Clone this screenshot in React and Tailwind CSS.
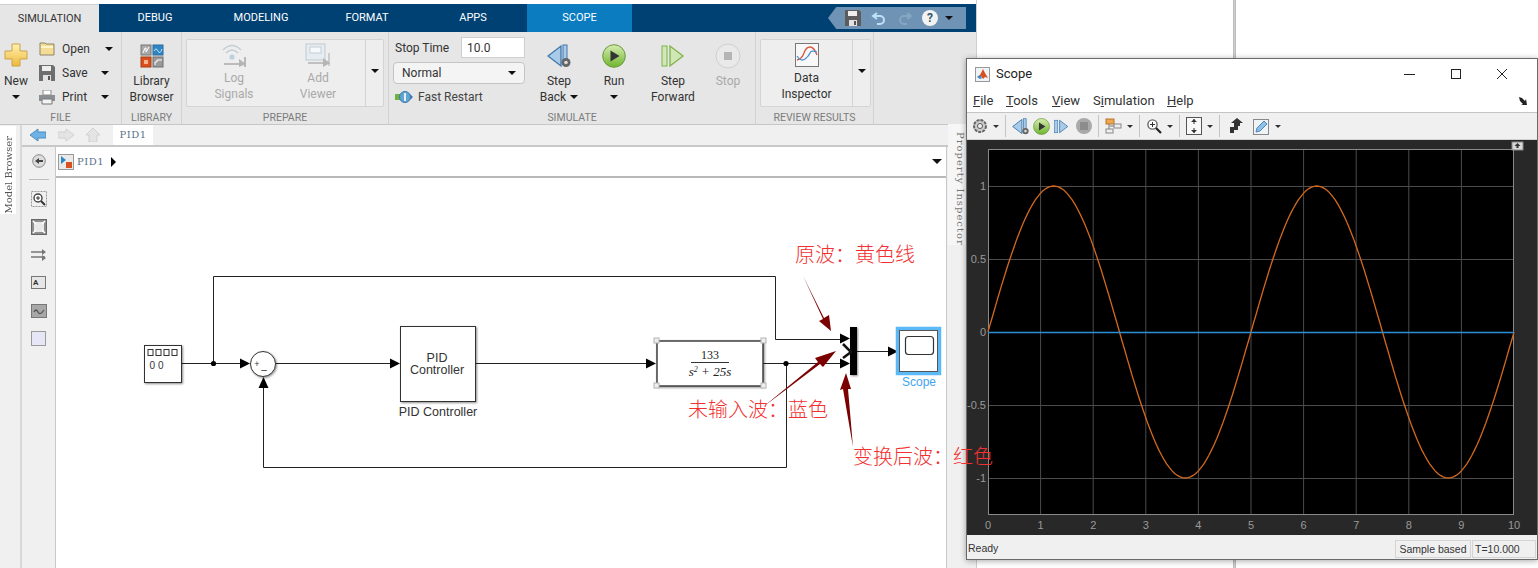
import React from "react";

const UI = "font-['Roboto','Noto_Sans',sans-serif]";
const SERIF = "font-['DejaVu_Serif','Liberation_Serif',serif]";

function Caret({ className = "" }) {
  return <span className={`inline-block w-0 h-0 border-x-[4px] border-x-transparent border-t-[4px] border-t-[#111] ${className}`} />;
}

/* ---------- ribbon icons ---------- */
const NewIcon = () => (
  <svg width="24" height="24" viewBox="0 0 24 24">
    <defs>
      <linearGradient id="plus" x1="0" y1="0" x2="0" y2="1">
        <stop offset="0" stopColor="#fff3b0" />
        <stop offset="1" stopColor="#eeb93a" />
      </linearGradient>
    </defs>
    <path d="M8 1h8v7h7v8h-7v7H8v-7H1V8h7z" fill="url(#plus)" stroke="#c9a24a" />
  </svg>
);
const OpenIcon = () => (
  <svg width="16" height="14" viewBox="0 0 16 14">
    <path d="M1 1h5l1 1h8v11H1z" fill="#f4dc96" stroke="#8d8468" />
    <path d="M2 4h12v2H2z" fill="#fff4c8" />
  </svg>
);
const SaveIcon = ({ dark }) => (
  <svg width="16" height="16" viewBox="0 0 16 16">
    <path d="M0 0h14l2 2v14H0z" fill={dark ? "#5c5c5c" : "#6e6e6e"} />
    <path d="M3 1h9v5H3z" fill="#eee" />
    <path d="M4 10h8v6H4z" fill="#e2e2e2" />
    <path d="M9 11h2v4H9z" fill="#555" />
  </svg>
);
const PrintIcon = () => (
  <svg width="16" height="15" viewBox="0 0 16 15">
    <path d="M4 0h8v5H4z" fill="#fff" stroke="#888" />
    <path d="M0 5h16v6H0z" fill="#8b8f94" />
    <path d="M3 9h10v5H3z" fill="#f3f3f3" stroke="#777" />
  </svg>
);
const LibraryIcon = () => (
  <svg width="24" height="24" viewBox="0 0 24 24">
    <rect x="1" y="1" width="10" height="10" fill="#a9a9a9" stroke="#777" />
    <path d="M3 9l2-5h1v4l3-5" stroke="#fff" fill="none" />
    <rect x="13" y="1" width="10" height="10" fill="#2f86c5" stroke="#2a6a9c" />
    <path d="M14 7q2-4 4 0t4-2" stroke="#bfe3fb" fill="none" />
    <rect x="1" y="13" width="10" height="10" fill="#d9501e" stroke="#a63a12" />
    <rect x="4" y="16" width="4" height="4" fill="#f6b38e" />
    <rect x="13" y="13" width="10" height="10" fill="#9a9a9a" stroke="#6f6f6f" />
    <path d="M15 21v-3h2v-2h5" stroke="#fff" fill="none" />
  </svg>
);
const LogIcon = () => (
  <svg width="26" height="24" viewBox="0 0 26 24" fill="none" stroke="#c3ced6" strokeWidth="1.6">
    <path d="M2 7q9-9 18 0M5 10q6-6 12 0" />
    <circle cx="11" cy="14" r="2.6" fill="#bcd0de" stroke="none" />
    <path d="M3 21h18" stroke="#bbb" strokeWidth="2" />
    <path d="M18 16l7 5-7 3z" fill="#b5b5b5" stroke="none" />
    <path d="M24 14v10" stroke="#aaa" />
  </svg>
);
const ViewerIcon = () => (
  <svg width="26" height="24" viewBox="0 0 26 24" fill="none">
    <rect x="1" y="1" width="19" height="16" fill="#e6edf2" stroke="#bfc9d0" />
    <rect x="5" y="4" width="11" height="6" fill="#f6f9fb" stroke="#c3ced6" />
    <path d="M3 20h18" stroke="#c0c0c0" strokeWidth="2" />
    <path d="M18 15l7 5-7 4z" fill="#b5b5b5" />
    <path d="M24 10v13" stroke="#aaa" />
  </svg>
);
const StepBackIcon = ({ s = 24 }) => (
  <svg width={s} height={s} viewBox="0 0 24 24">
    <path d="M14 2v20L1 12z" fill="#a9cbe8" stroke="#3f78ad" strokeWidth="1.3" />
    <rect x="16" y="1" width="4" height="15" fill="#a9cbe8" stroke="#3f78ad" />
    <circle cx="19" cy="18.5" r="4.5" fill="#666" />
    <circle cx="19" cy="18.5" r="1.8" fill="#ddd" />
  </svg>
);
const RunIcon = ({ s = 24 }) => (
  <svg width={s} height={s} viewBox="0 0 24 24">
    <defs>
      <linearGradient id={`run${s}`} x1="0" y1="0" x2="0" y2="1">
        <stop offset="0" stopColor="#d6ecb0" />
        <stop offset="1" stopColor="#6fb52f" />
      </linearGradient>
    </defs>
    <circle cx="12" cy="12" r="11.3" fill={`url(#run${s})`} stroke="#6a9a3c" />
    <path d="M8.5 6.5l9 5.5-9 5.5z" fill="#333" />
  </svg>
);
const StepFwdIcon = ({ color = "#7fb24c", fill = "#d2e8b4", s = 24 }) => (
  <svg width={s} height={s} viewBox="0 0 24 24">
    <rect x="1" y="2" width="5" height="20" fill={fill} stroke={color} />
    <path d="M9 2v20l13-10z" fill={fill} stroke={color} strokeWidth="1.3" />
  </svg>
);
const StopIcon = () => (
  <svg width="26" height="26" viewBox="0 0 26 26">
    <circle cx="13" cy="13" r="12" fill="#e9e9e9" stroke="#cfcfcf" />
    <rect x="9" y="9" width="8" height="8" fill="#b5b5b5" />
  </svg>
);
const InspectorIcon = () => (
  <svg width="24" height="24" viewBox="0 0 24 24" fill="none">
    <rect x="0.5" y="0.5" width="23" height="23" fill="#f8f8f8" stroke="#777" />
    <path d="M2 17q5-1 7-7t6-6 7 8" stroke="#d9573f" strokeWidth="1.3" />
    <path d="M2 13q4 6 8 3t5-6 7-1" stroke="#4a90d0" strokeWidth="1.3" />
  </svg>
);
const RestartIcon = () => (
  <svg width="18" height="12" viewBox="0 0 18 12">
    <rect x="0" y="3" width="6" height="6" fill="#6fb33a" />
    <circle cx="10" cy="6" r="5.5" fill="#5fa5d6" stroke="#3f78ad" />
    <rect x="9" y="2" width="2" height="8" fill="#e3f0fa" />
    <path d="M15 3l3 3-3 3z" fill="#3f78ad" />
  </svg>
);

function Section({ w, label, children }) {
  return (
    <div className={`${w} flex flex-col border-r border-[#d2d2d2] shrink-0`}>
      <div className="h-[78px] flex">{children}</div>
      <div className="h-[14px] leading-[15px] text-center text-[10.5px] text-[#7c7c7c]">{label}</div>
    </div>
  );
}

function Tool({ w, icon, lines, caret, disabled, iconH = "h-[34px]" }) {
  return (
    <div className={`${w} pt-[7px] flex flex-col items-center leading-[16px] text-[12px] ${disabled ? "text-[#a9a9a9]" : "text-[#333]"}`}>
      <div className={`${iconH} flex items-center justify-center`}>{icon}</div>
      {lines.map((l, i) => (
        <div key={i} className="flex items-center gap-[4px] h-[16px]">
          {l}
          {caret === "inline" && i === lines.length - 1 && <Caret />}
        </div>
      ))}
      {caret === "below" && (
        <div className="h-[16px] flex items-center">
          <Caret />
        </div>
      )}
    </div>
  );
}

function FileRow({ icon, text, caretW }) {
  return (
    <div className="h-[24px] flex items-center text-[12px] text-[#333]">
      <span className="w-[16px] flex justify-center">{icon}</span>
      <span className={`${caretW} pl-[7px]`}>{text}</span>
      <Caret />
    </div>
  );
}

function Ribbon() {
  return (
    <div className="h-[92px] shrink-0 flex bg-[#e6e6e6] border-b border-[#c6c6c6] box-content">
      <Section w="w-[122px]" label="FILE">
        <div className="w-[32px] pt-[11px] flex flex-col items-center text-[12px] text-[#333] leading-[16px]">
          <div className="h-[30px] flex items-start"><NewIcon /></div>
          <div>New</div>
          <div className="h-[16px] flex items-center"><Caret /></div>
        </div>
        <div className="pl-[7px] pt-[5px]">
          <FileRow icon={<OpenIcon />} text="Open" caretW="w-[50px]" />
          <FileRow icon={<SaveIcon />} text="Save" caretW="w-[46px]" />
          <FileRow icon={<PrintIcon />} text="Print" caretW="w-[46px]" />
        </div>
      </Section>
      <Section w="w-[60px]" label="LIBRARY">
        <Tool w="w-full" icon={<LibraryIcon />} lines={["Library", "Browser"]} />
      </Section>
      <Section w="w-[207px]" label="PREPARE">
        <div className="mx-[4px] mt-[7px] h-[68px] w-[199px] flex bg-[#eeeeee] border border-[#d4d4d4] rounded-[2px]">
          <div className="w-[178px] flex">
            <div className="w-[94px] -mt-[7px]">
              <Tool w="w-full" iconH="h-[30px]" icon={<LogIcon />} lines={["Log", "Signals"]} disabled />
            </div>
            <div className="w-[74px] -mt-[7px]">
              <Tool w="w-full" iconH="h-[30px]" icon={<ViewerIcon />} lines={["Add", "Viewer"]} disabled />
            </div>
          </div>
          <div className="flex-1 border-l border-[#d4d4d4] flex items-center justify-center pb-[4px]"><Caret /></div>
        </div>
      </Section>
      <Section w="w-[367px]" label="SIMULATE">
        <div className="w-[142px] pl-[4px] pt-[5px] text-[12px] text-[#333]">
          <div className="flex items-center h-[21px]">
            <span className="w-[68px] pl-[2px]">Stop Time</span>
            <div className="w-[64px] h-[21px] bg-white border border-[#cfcfcf] pl-[5px] leading-[20px]">10.0</div>
          </div>
          <div className="mt-[4px] w-[132px] h-[22px] bg-[#f4f4f4] border border-[#c4c4c4] rounded-[4px] flex items-center justify-between pl-[8px] pr-[8px]">
            Normal <Caret />
          </div>
          <div className="mt-[5px] flex items-center h-[16px] pl-[2px] gap-[5px] text-[#444]">
            <RestartIcon /> Fast Restart
          </div>
        </div>
        <Tool w="w-[56px]" icon={<StepBackIcon />} lines={["Step", "Back"]} caret="inline" />
        <Tool w="w-[54px]" icon={<RunIcon />} lines={["Run"]} caret="below" />
        <Tool w="w-[64px]" icon={<StepFwdIcon />} lines={["Step", "Forward"]} />
        <Tool w="w-[46px]" icon={<StopIcon />} lines={["Stop"]} disabled />
      </Section>
      <Section w="w-[118px]" label="REVIEW RESULTS">
        <div className="ml-[4px] mt-[7px] h-[68px] w-[111px] flex bg-[#eeeeee] border border-[#d4d4d4] rounded-[2px]">
          <div className="w-[91px] -mt-[7px]">
            <Tool w="w-full" iconH="h-[30px]" icon={<InspectorIcon />} lines={["Data", "Inspector"]} />
          </div>
          <div className="flex-1 border-l border-[#d4d4d4] flex items-center justify-center pb-[4px]"><Caret /></div>
        </div>
      </Section>
    </div>
  );
}

function TabBar() {
  const tabs = ["DEBUG", "MODELING", "FORMAT", "APPS"];
  return (
    <div className="h-[28px] shrink-0 flex items-stretch bg-[#004173] text-[11px] leading-[28px] text-white text-center">
      <div className="w-[99px] mr-[3px] bg-[#e6e6e6] text-[#333] border-t border-[#d0d0d0]">SIMULATION</div>
      {tabs.map((t) => (
        <div key={t} className="w-[106px]">{t}</div>
      ))}
      <div className="w-[105px] ml-[1px] bg-[#0a7cbf]">SCOPE</div>
      <div className="ml-auto mr-[10px] mt-[3px] w-[138px] h-[22px] bg-[#6f93b4] [clip-path:polygon(0_50%,6%_0,100%_0,100%_100%,6%_100%)] flex items-center pl-[17px]">
        <SaveIcon dark />
        <svg className="ml-[10px]" width="16" height="14" viewBox="0 0 16 14" fill="none" stroke="#bfe0f7" strokeWidth="2">
          <path d="M6 2L2 5l4 3M2 5h7a4 4 0 010 8H6" />
        </svg>
        <svg className="ml-[10px]" width="16" height="14" viewBox="0 0 16 14" fill="none" stroke="#86a7c2" strokeWidth="2">
          <path d="M10 2l4 3-4 3M14 5H7a4 4 0 000 8h3" />
        </svg>
        <span className="ml-[9px] w-[16px] h-[16px] rounded-full bg-[#f2f2f2] text-[#34556f] text-[12px] leading-[16px] font-bold">?</span>
        <Caret className="ml-[7px]" />
      </div>
    </div>
  );
}

/* ---------- palette on the left of the model ---------- */
function Palette() {
  return (
    <div className="w-[33px] shrink-0 bg-[#f0f0f0] flex flex-col items-center pt-[7px]">
      <svg width="14" height="14" viewBox="0 0 14 14">
        <circle cx="7" cy="7" r="6.3" fill="#ddd" stroke="#888" />
        <path d="M3 7l4-3v2h4v2H7v2z" fill="#444" />
      </svg>
      <div className="mt-[11px] w-[20px] h-px bg-[#bdbdbd]" />
      <svg className="mt-[11px]" width="16" height="16" viewBox="0 0 16 16" fill="none">
        <rect x="0.5" y="0.5" width="15" height="15" stroke="#999" strokeDasharray="2 1" />
        <circle cx="7" cy="7" r="4" fill="#fff" stroke="#444" strokeWidth="1.4" />
        <path d="M10 10l4 4" stroke="#333" strokeWidth="2" />
        <path d="M5 7h4M7 5v4" stroke="#333" />
      </svg>
      <svg className="mt-[12px]" width="16" height="16" viewBox="0 0 16 16" fill="none">
        <rect x="0.5" y="0.5" width="15" height="15" fill="#8f8f8f" stroke="#666" />
        <rect x="3" y="3" width="10" height="10" fill="#e9e9e9" />
        <path d="M2 2l3 3M14 2l-3 3M2 14l3-3M14 14l-3-3" stroke="#fff" strokeWidth="1.5" />
      </svg>
      <svg className="mt-[12px]" width="16" height="16" viewBox="0 0 16 16" fill="none" stroke="#777" strokeWidth="1.5">
        <path d="M0 5h14M0 10h14" />
        <path d="M11 2l4 3-4 3zM11 8l4 3-4 3z" fill="#777" stroke="none" />
      </svg>
      <div className="mt-[13px] w-[15px] h-[13px] bg-[#e6e6e6] border border-[#777] flex items-center pl-[1px] text-[8px] leading-none font-bold text-[#333]">A</div>
      <svg className="mt-[15px]" width="16" height="14" viewBox="0 0 16 14" fill="none">
        <rect x="0.5" y="0.5" width="15" height="13" fill="#a8a8a8" stroke="#777" />
        <path d="M3 8q2-4 4 0t6-2" stroke="#555" strokeWidth="1.3" />
      </svg>
      <div className="mt-[13px] w-[15px] h-[15px] bg-[#e6e6f7] border border-[#9a9a9a]" />
    </div>
  );
}

/* ---------- block diagram, drawn in page coordinates ---------- */
function Arrow({ x, y }) {
  return <path d={`M${x - 10} ${y - 5}L${x} ${y}L${x - 10} ${y + 5}z`} fill="#000" />;
}

function Diagram() {
  return (
    <svg className="absolute left-0 top-0" width="889" height="390" viewBox="56 178 889 390">
      <defs>
        <filter id="shadow" x="-20%" y="-20%" width="140%" height="140%">
          <feDropShadow dx="1" dy="1" stdDeviation="1" floodColor="#000" floodOpacity="0.45" />
        </filter>
      </defs>
      <g fill="none" stroke="#222" strokeWidth="1">
        <path d="M182 363.5H241M213.5 363V276.5H775.5V339.5H841" />
        <path d="M276 363.5H391M475 363.5H647M763 363.5H841" />
        <path d="M786.5 363V467.5H263.5V388" />
        <path d="M857 351.5H889" />
      </g>
      <circle cx="213.5" cy="363.5" r="2.6" fill="#000" />
      <circle cx="786" cy="363.5" r="2.6" fill="#000" />
      <Arrow x={250} y={363.5} />
      <Arrow x={400} y={363.5} />
      <Arrow x={656} y={363.5} />
      <Arrow x={850} y={338.5} />
      <Arrow x={850} y={363.5} />
      <Arrow x={898} y={351.5} />
      <path d="M258.5 388L263.5 377L268.5 388z" fill="#000" />

      <g filter="url(#shadow)" fill="#fff" stroke="#333">
        <rect x="144.5" y="345.5" width="37" height="37" />
        <circle cx="263" cy="364" r="12.5" />
        <rect x="400.5" y="326.5" width="75" height="75" />
        <rect x="657" y="341" width="106" height="45" strokeWidth="1.4" />
      </g>
      <g fill="#fff" stroke="#333">
        <rect x="148" y="349.5" width="5" height="6" />
        <rect x="156" y="349.5" width="5" height="6" />
        <rect x="164" y="349.5" width="5" height="6" />
        <rect x="172" y="349.5" width="5" height="6" />
      </g>
      <g fill="#eee" stroke="#b4b4b4">
        <rect x="654" y="338" width="5" height="5" />
        <rect x="761" y="338" width="5" height="5" />
        <rect x="654" y="383" width="5" height="5" />
        <rect x="761" y="383" width="5" height="5" />
      </g>
      <g className="font-['Liberation_Sans',sans-serif]" fill="#333" textAnchor="middle">
        <text x="158" y="369" fontSize="10" letterSpacing="3">00</text>
        <text x="257" y="367" fontSize="9">+</text>
        <text x="264" y="373" fontSize="10">–</text>
        <text x="437" y="362" fontSize="12.5">PID</text>
        <text x="437" y="374" fontSize="12.5">Controller</text>
        <text x="438" y="416" fontSize="12.5">PID Controller</text>
        <text x="919" y="386" fontSize="12" fill="#3fa5ef">Scope</text>
      </g>
      <g className="font-['Liberation_Serif',serif]" fill="#222" textAnchor="middle">
        <text x="710" y="359" fontSize="12">133</text>
        <path d="M691 362.5H729" stroke="#333" />
        <text x="710" y="376" fontSize="13" fontStyle="italic">
          s<tspan fontSize="8" dy="-4">2</tspan><tspan dy="4"> + 25s</tspan>
        </text>
      </g>

      <rect x="850" y="327" width="7" height="48" fill="#000" filter="url(#shadow)" />
      <path d="M843 344L851 352L843 358" fill="none" stroke="#111" strokeWidth="2.5" />

      <rect x="897.5" y="328.5" width="42" height="45" fill="#fff" stroke="#5bb9f7" strokeWidth="3.5" />
      <rect x="899.5" y="330.5" width="38" height="41" fill="#fff" stroke="#555" />
      <rect x="905.5" y="336.5" width="28" height="18" rx="3" fill="#fff" stroke="#333" strokeWidth="1.2" />
    </svg>
  );
}

/* ---------- red call-outs, they lie over both windows ---------- */
function Callouts() {
  const note = "absolute whitespace-nowrap text-[20px] leading-[26px] text-[#f23030] font-['Noto_Sans_CJK_SC',sans-serif] font-light";
  return (
    <>
      <svg className="absolute inset-0" width="1538" height="568" viewBox="0 0 1538 568">
        <g fill="#7b0000">
          <path d="M803 276L824 318L829 315L831 331L819 321L823 319z" />
          <path d="M763 407L818 362L815 358L836 351L823 367L820 364z" />
          <path d="M853 447L843 389L840 390L846 373L851 389L848 389z" />
        </g>
      </svg>
      <div className={`${note} left-[795px] top-[241px]`}>原波：黄色线</div>
      <div className={`${note} left-[688px] top-[396px]`}>未输入波：蓝色</div>
      <div className={`${note} left-[853px] top-[443px]`}>变换后波：红色</div>
    </>
  );
}

/* ---------- scope window ---------- */
function ScopePlot() {
  const X0 = 988;
  const Y0 = 332;
  const sx = 52.6;
  const sy = 146;
  let sine = "";
  for (let t = 0; t <= 10.001; t += 0.05) {
    const x = X0 + t * sx;
    const y = Y0 - Math.sin((2 * Math.PI * t) / 5) * sy;
    sine += `${t === 0 ? "M" : "L"}${x.toFixed(1)} ${y.toFixed(1)}`;
  }
  const xs = [0, 1, 2, 3, 4, 5, 6, 7, 8, 9, 10];
  const ys = [
    ["1", 186],
    ["0.5", 259],
    ["0", 332],
    ["-0.5", 405],
    ["-1", 478],
  ];
  return (
    <div className="relative h-[395px] bg-[#282828]">
      <svg className="absolute inset-0 w-full h-full" viewBox="967 140 570 395">
        <rect x="988.5" y="149.5" width="525" height="365" fill="#000" stroke="#8a8a8a" />
        {xs.slice(1, -1).map((v) => (
          <path key={v} d={`M${X0 + v * sx} 150V514`} stroke="#4c4c4c" />
        ))}
        {ys.map(([l, y]) => (
          <path key={l} d={`M989 ${y}.5H1513`} stroke="#4c4c4c" />
        ))}
        <path d={sine} fill="none" stroke="#d2691e" strokeWidth="1.3" />
        <path d="M988 332.5H1514" stroke="#2d8fd6" strokeWidth="1.3" />
        <g className="font-['Liberation_Sans',sans-serif]" fontSize="11" fill="#9a9a9a">
          {xs.map((v) => (
            <text key={v} x={X0 + v * sx} y="529" textAnchor="middle">{v}</text>
          ))}
          {ys.map(([l, y]) => (
            <text key={l} x="986" y={y + 4} textAnchor="end">{l}</text>
          ))}
        </g>
        <rect x="1512" y="142" width="11" height="8" fill="#d8d8d8" stroke="#888" />
        <path d="M1517.5 143l3 3h-2v2h-2v-2h-2z" fill="#333" />
      </svg>
    </div>
  );
}

function ToolSep() {
  return <span className="w-px h-[22px] bg-[#c4c4c4] mx-[6px]" />;
}

function SmallCaret() {
  return <span className="ml-[5px] inline-block w-0 h-0 border-x-[3px] border-x-transparent border-t-[3px] border-t-[#333]" />;
}

function ScopeWindow() {
  return (
    <div className={`${UI} absolute left-[966px] top-[58px] w-[572px] h-[502px] bg-[#f0f0f0] border border-[#6a6a6a] shadow-[0_1px_6px_rgba(0,0,0,0.35)] flex flex-col`}>
      <div className="h-[31px] shrink-0 bg-white flex items-center pl-[8px] pb-[1px] text-[13px] text-[#222]">
        <svg width="15" height="15" viewBox="0 0 15 15">
          <rect x="0.5" y="0.5" width="14" height="14" fill="#eef3f8" stroke="#999" />
          <path d="M2 10l3-2 3-6 2 4 3 5-3-1-2 2-2-3z" fill="#d9501e" />
          <path d="M2 10l3-2 2 3-2 1z" fill="#3f86c5" />
        </svg>
        <span className="ml-[6px]">Scope</span>
        <div className="ml-auto mr-[6px] flex items-center text-[#222]">
          <svg width="46" height="14" viewBox="0 0 46 14" stroke="#222"><path d="M17 7.5H28" /></svg>
          <svg width="46" height="14" viewBox="0 0 46 14" fill="none" stroke="#222"><rect x="18.5" y="2.5" width="9" height="9" /></svg>
          <svg className="mr-[6px]" width="46" height="14" viewBox="0 0 46 14" stroke="#222"><path d="M18 2l10 10M28 2L18 12" /></svg>
        </div>
      </div>
      <div className="h-[23px] shrink-0 bg-white border-b border-[#c4c4c4] flex items-center pl-[6px] text-[13px] text-[#333] relative">
        <span className="w-[33px]"><u>F</u>ile</span>
        <span className="w-[46px]"><u>T</u>ools</span>
        <span className="w-[41px]"><u>V</u>iew</span>
        <span className="w-[74px]">S<u>i</u>mulation</span>
        <span><u>H</u>elp</span>
        <svg className="ml-auto mr-[10px]" width="8" height="8" viewBox="0 0 8 8"><path d="M0 0l3 1 3 3 1-2 1 6H2l2-1-3-3z" fill="#222" /></svg>
      </div>
      <div className="h-[27px] shrink-0 bg-[#f0f0f0] border-b border-[#d0d0d0] flex items-center pl-[5px]">
        <svg width="16" height="16" viewBox="0 0 16 16" fill="none">
          <circle cx="8" cy="8" r="6" fill="#ccc" stroke="#666" strokeWidth="2" strokeDasharray="3 1" />
          <circle cx="8" cy="8" r="2.5" fill="#f3f3f3" stroke="#555" />
        </svg>
        <SmallCaret />
        <ToolSep />
        <span className="flex items-center gap-[4px]">
          <StepBackIcon s={17} />
          <RunIcon s={17} />
          <StepFwdIcon s={15} color="#3f78ad" fill="#a9cbe8" />
          <span className="ml-[3px] w-[16px] h-[16px] rounded-full bg-[#a9a9a9] flex items-center justify-center">
            <span className="w-[8px] h-[8px] bg-[#8c8c8c]" />
          </span>
        </span>
        <ToolSep />
        <svg width="17" height="16" viewBox="0 0 17 16" fill="none">
          <rect x="1" y="1" width="8" height="5" fill="#f2a64e" stroke="#b4762c" />
          <rect x="9" y="6" width="7" height="4" fill="#eee" stroke="#888" />
          <rect x="1" y="11" width="7" height="4" fill="#eee" stroke="#888" />
          <path d="M4 6v5M9 8H5" stroke="#777" />
        </svg>
        <SmallCaret />
        <ToolSep />
        <svg width="16" height="16" viewBox="0 0 16 16" fill="none">
          <circle cx="6.5" cy="6.5" r="4.6" fill="#fff" stroke="#666" strokeWidth="1.4" />
          <path d="M10 10l5 5" stroke="#222" strokeWidth="2.2" />
          <path d="M4 6.5h5M6.5 4v5" stroke="#333" />
        </svg>
        <SmallCaret />
        <ToolSep />
        <svg width="16" height="18" viewBox="0 0 16 18" fill="none">
          <rect x="0.5" y="0.5" width="15" height="17" fill="#f8f8f8" stroke="#555" />
          <path d="M8 2v5M8 11v5" stroke="#333" />
          <path d="M5 5l3-3 3 3zM5 13l3 3 3-3z" fill="#333" />
        </svg>
        <SmallCaret />
        <ToolSep />
        <svg className="ml-[3px]" width="16" height="16" viewBox="0 0 16 16">
          <path d="M1 15V9h4V5H2l6-5 6 5h-3v3H9v4H5v3z" fill="#333" />
        </svg>
        <svg className="ml-[8px]" width="17" height="17" viewBox="0 0 17 17" fill="none">
          <rect x="0.5" y="1.5" width="15" height="15" fill="#eef3f8" stroke="#888" />
          <path d="M3 14l1-4 7-7 3 3-7 7z" fill="#8fc0e8" stroke="#4f86b8" />
        </svg>
        <SmallCaret />
      </div>
      <ScopePlot />
      <div className="flex-1 bg-[#f0f0f0] flex items-center pl-[1px] pt-[4px] text-[10.5px] text-[#333] font-['Liberation_Sans',sans-serif]">
        <span>Ready</span>
        <div className="ml-auto flex gap-[1px] mr-[1px]">
          <span className="w-[76px] h-[18px] border border-[#d4d4d4] text-center leading-[17px]">Sample based</span>
          <span className="w-[64px] h-[18px] border border-[#d4d4d4] pl-[2px] leading-[17px]">T=10.000</span>
        </div>
      </div>
    </div>
  );
}

export default function App() {
  return (
    <div className={`${UI} relative w-[1538px] h-[568px] overflow-hidden bg-white flex`}>
      {/* simulink window */}
      <div className="w-[976px] h-full shrink-0 flex flex-col pt-[4px] border-r border-[#cfcfcf] box-content">
        <TabBar />
        <Ribbon />
        <div className="flex-1 min-h-0 flex bg-[#f0f0f0]">
          {/* model browser tab */}
          <div className="w-[22px] shrink-0 border-r-2 border-[#d8d8d8]">
            <div className={`${SERIF} mt-[1px] w-[16px] h-[88px] pt-[10px] bg-white flex items-center justify-center text-[10px] text-[#555]`}>
              <span className="[writing-mode:vertical-rl] rotate-180 whitespace-nowrap">Model Browser</span>
            </div>
          </div>
          <div className="flex-1 flex flex-col min-w-0">
            <div className="h-[20px] shrink-0 flex items-center border-b-2 border-[#c8c8c8] box-content">
              <div className="w-[91px] pl-[8px] flex items-center gap-[12px]">
                <svg width="16" height="14" viewBox="0 0 16 14"><path d="M0 7l8-6v3h8v6H8v3z" fill="#6db1e5" stroke="#4d8cbd" /></svg>
                <svg width="16" height="14" viewBox="0 0 16 14"><path d="M16 7L8 1v3H0v6h8v3z" fill="#e4e4e4" stroke="#d0d0d0" /></svg>
                <svg width="14" height="14" viewBox="0 0 14 14"><path d="M7 0l7 7h-3v7H3V7H0z" fill="#e4e4e4" stroke="#d0d0d0" /></svg>
              </div>
              <div className={`${SERIF} w-[40px] h-[20px] bg-white leading-[20px] text-center text-[10px] tracking-[0.5px] text-[#5b7389]`}>PID1</div>
            </div>
            <div className="flex-1 min-h-0 flex">
              <Palette />
              <div className="flex-1 flex flex-col min-w-0 border-l border-[#c8c8c8]">
                <div className="h-[31px] shrink-0 bg-white border-b-2 border-[#b9b9b9] flex items-center pl-[2px] pr-[3px]">
                  <svg width="16" height="16" viewBox="0 0 16 16">
                    <rect x="0.5" y="0.5" width="15" height="15" fill="#e9e9e9" stroke="#999" />
                    <path d="M3 2l5 4-5 4z" fill="#2f86c5" />
                    <rect x="8" y="8" width="6" height="6" fill="#d9501e" />
                  </svg>
                  <span className={`${SERIF} ml-[3px] text-[10px] tracking-[0.5px] text-[#5b7389]`}>PID1</span>
                  <span className="ml-[7px] w-0 h-0 border-y-[5px] border-y-transparent border-l-[5px] border-l-black" />
                  <Caret className="ml-auto mr-[1px] border-x-[5px] border-t-[5px]" />
                </div>
                <div className="flex-1 relative bg-white">
                  <Diagram />
                </div>
              </div>
              {/* property inspector tab */}
              <div className="w-[30px] shrink-0 border-l border-[#c8c8c8] pl-[1px]">
                <div className={`${SERIF} -mt-[23px] w-[20px] h-[121px] pt-[8px] bg-[#f6f6f6] flex items-center justify-end text-[10px] text-[#777] tracking-[1px]`}>
                  <span className="[writing-mode:vertical-rl] whitespace-nowrap">Property Inspector</span>
                </div>
              </div>
            </div>
          </div>
        </div>
      </div>
      {/* desktop behind the windows */}
      <div className="w-[256px] shrink-0" />
      <div className="w-[3px] h-full bg-[#cfcfcf] border-x border-[#bdbdbd]" />
      <ScopeWindow />
      <Callouts />
    </div>
  );
}
